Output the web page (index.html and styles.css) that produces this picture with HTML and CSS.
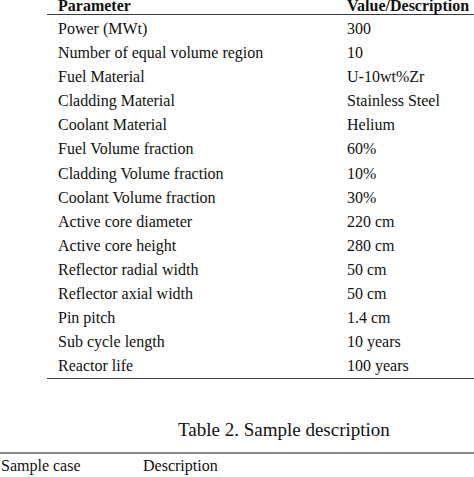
FILE: index.html
```html
<!DOCTYPE html>
<html>
<head>
<meta charset="utf-8">
<link rel="stylesheet" href="styles.css">
</head>
<body>
<div class="t1">
  <div class="row hdr"><span>Parameter</span><span>Value/Description</span></div>
  <div class="rows">
    <div class="row"><span>Power (MWt)</span><span>300</span></div>
    <div class="row"><span>Number of equal volume region</span><span>10</span></div>
    <div class="row"><span>Fuel Material</span><span>U-10wt%Zr</span></div>
    <div class="row"><span>Cladding Material</span><span>Stainless Steel</span></div>
    <div class="row"><span>Coolant Material</span><span>Helium</span></div>
    <div class="row"><span>Fuel Volume fraction</span><span>60%</span></div>
    <div class="row"><span>Cladding Volume fraction</span><span>10%</span></div>
    <div class="row"><span>Coolant Volume fraction</span><span>30%</span></div>
    <div class="row"><span>Active core diameter</span><span>220 cm</span></div>
    <div class="row"><span>Active core height</span><span>280 cm</span></div>
    <div class="row"><span>Reflector radial width</span><span>50 cm</span></div>
    <div class="row"><span>Reflector axial width</span><span>50 cm</span></div>
    <div class="row"><span>Pin pitch</span><span>1.4 cm</span></div>
    <div class="row"><span>Sub cycle length</span><span>10 years</span></div>
    <div class="row"><span>Reactor life</span><span>100 years</span></div>
  </div>
</div>
<div class="caption">Table 2. Sample description</div>
<div class="t2">
  <div class="row2"><span>Sample case</span><span>Description</span></div>
</div>
</body>
</html>
```
FILE: styles.css
```css
html, body {
  margin: 0;
  padding: 0;
  overflow: hidden;
  background: #fff;
}
body {
  font-family: "Liberation Serif", "Times New Roman", serif;
  font-size: 16px;
  color: #111;
  width: 474px;
  height: 477px;
}
.t1 {
  margin-left: 47px;
  width: 520px;
}
.row {
  display: grid;
  grid-template-columns: 289px 1fr;
  padding-left: 11px;
  line-height: 24.1px;
  white-space: nowrap;
}
.hdr {
  font-weight: bold;
  line-height: 11px;
  padding-bottom: 3px;
  border-bottom: 1px solid #3a3a3a;
}
.rows {
  padding-top: 2px;
  border-bottom: 1px solid #3a3a3a;
}
.caption {
  margin-top: 40px;
  padding-left: 178px;
  font-size: 19px;
  line-height: 22px;
  white-space: nowrap;
}
.t2 {
  margin-top: 11px;
  border-top: 2px solid #8a8a8a;
}
.row2 {
  display: grid;
  grid-template-columns: 142px 1fr;
  padding-left: 1px;
  line-height: 23px;
  white-space: nowrap;
}
```
